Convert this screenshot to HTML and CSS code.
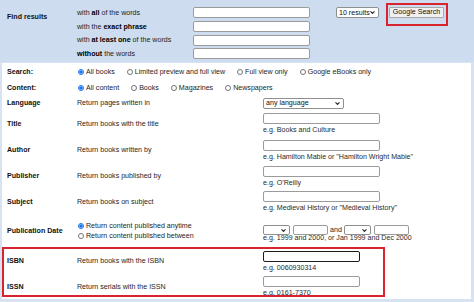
FILE: index.html
```html
<!DOCTYPE html>
<html lang="en">
  <head>
    <meta charset="UTF-8" />
    <title>Advanced Book Search</title>
    <link rel="stylesheet" href="styles.css">
  </head>
  <body>
    <div class="find">
      <div class="find-label">Find results</div>
      <div class="find-rows">
        <div class="find-row">
          <span class="find-text">with <b>all</b> of the words</span>
          <input type="text" class="box wide" />
        </div>
        <div class="find-row">
          <span class="find-text">with the <b>exact phrase</b></span>
          <input type="text" class="box wide" />
        </div>
        <div class="find-row">
          <span class="find-text">with <b>at least one</b> of the words</span>
          <input type="text" class="box wide" />
        </div>
        <div class="find-row">
          <span class="find-text"><b>without</b> the words</span>
          <input type="text" class="box wide" />
        </div>
      </div>
      <div class="find-actions">
        <span class="sel">
          <select class="pick num"><option>10 results</option></select>
          <svg class="chev" viewBox="0 0 5 3"><polyline points="0.5,0.4 2.5,2.4 4.5,0.4" /></svg>
        </span>
        <span class="go-wrap"><button type="button" class="go">Google Search</button></span>
      </div>
    </div>

    <div class="panel">
      <div class="row r-search">
        <div class="lbl">Search:</div>
        <div class="opts">
          <label class="opt"><input type="radio" name="search" checked />All books</label>
          <label class="opt"><input type="radio" name="search" />Limited preview and full view</label>
          <label class="opt"><input type="radio" name="search" />Full view only</label>
          <label class="opt"><input type="radio" name="search" />Google eBooks only</label>
        </div>
      </div>
      <div class="row r-content">
        <div class="lbl">Content:</div>
        <div class="opts">
          <label class="opt"><input type="radio" name="content" checked />All content</label>
          <label class="opt"><input type="radio" name="content" />Books</label>
          <label class="opt"><input type="radio" name="content" />Magazines</label>
          <label class="opt"><input type="radio" name="content" />Newspapers</label>
        </div>
      </div>
      <div class="row r-lang">
        <div class="lbl">Language</div>
        <div class="desc">Return pages written in</div>
        <div class="field">
          <span class="sel">
            <select class="pick lang"><option>any language</option></select>
            <svg class="chev" viewBox="0 0 5 3"><polyline points="0.5,0.4 2.5,2.4 4.5,0.4" /></svg>
          </span>
        </div>
      </div>
      <div class="row r-title">
        <div class="lbl">Title</div>
        <div class="desc">Return books with the title</div>
        <div class="field">
          <input type="text" class="box long" />
          <div class="hint">e.g. Books and Culture</div>
        </div>
      </div>
      <div class="row r-std">
        <div class="lbl">Author</div>
        <div class="desc">Return books written by</div>
        <div class="field">
          <input type="text" class="box long" />
          <div class="hint">e.g. Hamilton Mabie or "Hamilton Wright Mabie"</div>
        </div>
      </div>
      <div class="row r-std">
        <div class="lbl">Publisher</div>
        <div class="desc">Return books published by</div>
        <div class="field">
          <input type="text" class="box long" />
          <div class="hint">e.g. O'Reilly</div>
        </div>
      </div>
      <div class="row r-short">
        <div class="lbl">Subject</div>
        <div class="desc">Return books on subject</div>
        <div class="field">
          <input type="text" class="box long" />
          <div class="hint">e.g. Medieval History or "Medieval History"</div>
        </div>
      </div>
      <div class="row r-date">
        <div class="lbl">Publication Date</div>
        <div class="desc">
          <label class="line"><input type="radio" name="date" checked />Return content published anytime</label>
          <label class="line"><input type="radio" name="date" />Return content published between</label>
        </div>
        <div class="field date-field">
          <div class="date-line">
            <span class="sel">
              <select class="pick small"><option></option></select>
              <svg class="chev" viewBox="0 0 5 3"><polyline points="0.5,0.4 2.5,2.4 4.5,0.4" /></svg>
            </span>
            <input type="text" class="box year" />
            <span class="and">and</span>
            <span class="sel">
              <select class="pick small"><option></option></select>
              <svg class="chev" viewBox="0 0 5 3"><polyline points="0.5,0.4 2.5,2.4 4.5,0.4" /></svg>
            </span>
            <input type="text" class="box year" />
          </div>
          <div class="hint tight">e.g. 1999 and 2000, or Jan 1999 and Dec 2000</div>
        </div>
      </div>
      <div class="marked">
        <div class="row r-std">
          <div class="lbl">ISBN</div>
          <div class="desc">Return books with the ISBN</div>
          <div class="field">
            <input type="text" class="box mid focused" />
            <div class="hint">e.g. 0060930314</div>
          </div>
        </div>
        <div class="row r-short">
          <div class="lbl">ISSN</div>
          <div class="desc">Return serials with the ISSN</div>
          <div class="field">
            <input type="text" class="box mid" />
            <div class="hint">e.g. 0161-7370</div>
          </div>
        </div>
      </div>
    </div>
  </body>
</html>
```

FILE: styles.css
```css
body {
  margin: 0;
  padding: 0;
  font-family: "Liberation Sans", Arial, sans-serif;
  font-size: 7.1px;
  color: #1e1e1e;
  background-color: #d8e3f2;
  height: 302px;
  overflow: hidden;
}
b {
  color: #000;
}

/* top search block */
.find {
  display: flex;
  height: 62px;
  background-color: #cddcee;
}
.find-label {
  width: 70px;
  padding-left: 7px;
  padding-top: 13px;
  font-weight: bold;
  color: #111;
  line-height: 8px;
}
.find-rows {
  padding-top: 6px;
}
.find-row {
  display: flex;
  align-items: center;
  height: 13.7px;
}
.find-text {
  width: 116px;
  line-height: 8px;
}
.find-actions {
  display: flex;
  align-items: flex-start;
  margin-left: 26px;
  padding-top: 7px;
}
.go-wrap {
  position: relative;
  margin-left: 10px;
}
.go-wrap::after {
  content: "";
  position: absolute;
  left: -3px;
  top: -4px;
  width: 62px;
  height: 23px;
  border: 2px solid #d9232f;
  box-sizing: border-box;
}
.go {
  display: block;
  width: 55px;
  height: 11px;
  padding: 0;
  font-family: "Liberation Sans", Arial, sans-serif;
  font-size: 7.1px;
  line-height: 9px;
  color: #111;
  background-color: #f0f0f0;
  border: 1px solid #a9a9a9;
  border-radius: 1px;
}

/* inputs */
.box {
  display: block;
  box-sizing: border-box;
  height: 11px;
  margin: 0;
  padding: 0;
  border: 1px solid #9b9b9b;
  border-radius: 2px;
  background: #fff;
}
.wide,
.long {
  width: 117px;
}
.mid {
  width: 97px;
}
.focused {
  border: 1.5px solid #1c1c1c;
}
.sel {
  position: relative;
  display: block;
  width: fit-content;
}
.chev {
  position: absolute;
  right: 4px;
  top: 50%;
  width: 5px;
  height: 3px;
  margin-top: -1.5px;
  fill: none;
  stroke: #222;
  stroke-width: 1.1;
}
.pick {
  display: block;
  box-sizing: border-box;
  height: 11px;
  margin: 0;
  padding: 0 0 0 2px;
  font-family: "Liberation Sans", Arial, sans-serif;
  font-size: 7.1px;
  color: #111;
  border: 1px solid #8f8f8f;
  border-radius: 2px;
  background-color: #fff;
  appearance: none;
  -webkit-appearance: none;
}
.num {
  width: 43px;
}
.lang {
  width: 81px;
}

/* main panel */
.panel {
  margin: 1px 3px 0 2px;
  height: 236px;
  background-color: #fff;
}
.row {
  display: grid;
  grid-template-columns: 70px 186px 1fr;
  align-items: center;
  padding-left: 5px;
  line-height: 8px;
}
.r-search {
  height: 17px;
}
.r-content {
  height: 16px;
}
.r-lang {
  height: 14px;
}
.r-title {
  height: 27px;
}
.r-std {
  height: 26px;
}
.r-short {
  height: 25px;
}
.r-date {
  height: 34px;
}
.lbl {
  font-weight: bold;
  color: #111;
}
.opts {
  grid-column: 2 / 4;
  display: flex;
  align-items: center;
}
.opt {
  display: flex;
  align-items: center;
  margin-left: 1px;
  margin-right: 11px;
}
input[type="radio"] {
  width: 6px;
  height: 6px;
  margin: 0 2px 0 0;
  accent-color: #1a73e8;
}
.line {
  display: flex;
  align-items: center;
  height: 10px;
  margin-left: 1px;
}
.hint {
  margin-top: 2px;
  color: #2a2a2a;
}
.tight {
  margin-top: 0;
  line-height: 7px;
}
.date-field {
  align-self: start;
  margin-top: 11px;
}
.date-line {
  display: flex;
  align-items: center;
}
.small {
  width: 27px;
  height: 10px;
}
.year {
  width: 35px;
  height: 10px;
  margin-left: 3px;
}
.and {
  margin: 0 2px 0 2px;
}

/* highlighted ISBN / ISSN block */
.marked {
  position: relative;
}
.marked::after {
  content: "";
  position: absolute;
  left: 0;
  top: -1px;
  width: 383px;
  height: 50px;
  border: 2px solid #d9232f;
  box-sizing: border-box;
}
```
